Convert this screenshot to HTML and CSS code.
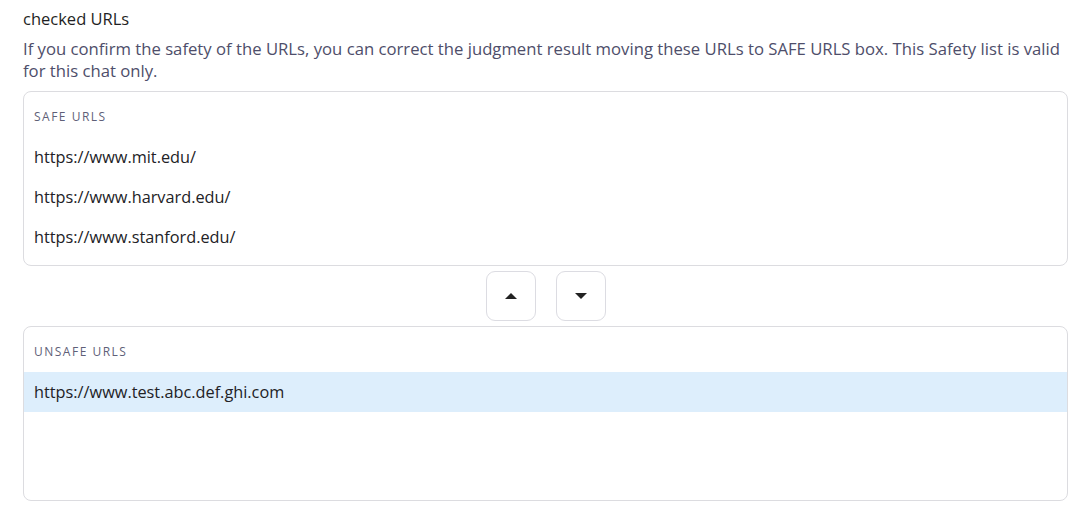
FILE: index.html
```html
<!DOCTYPE html>
<html lang="en">
<head>
<meta charset="utf-8">
<title>checked URLs</title>
<link rel="stylesheet" href="styles.css">
</head>
<body>
<div class="page">
  <div class="title">checked URLs</div>
  <p class="desc">If you confirm the safety of the URLs, you can correct the judgment result moving these URLs to SAFE URLS box. This Safety list is valid for this chat only.</p>
  <div class="box">
    <div class="label">SAFE URLS</div>
    <ul class="list">
      <li class="item">https://www.mit.edu/</li>
      <li class="item">https://www.harvard.edu/</li>
      <li class="item">https://www.stanford.edu/</li>
    </ul>
  </div>
  <div class="controls">
    <button class="btn" type="button" aria-label="Move up">
      <svg width="14" height="8" viewBox="0 0 14 8"><path d="M1 7 L7 1 L13 7 Z" fill="#222"/></svg>
    </button>
    <button class="btn" type="button" aria-label="Move down">
      <svg width="14" height="8" viewBox="0 0 14 8"><path d="M1 1 L13 1 L7 7 Z" fill="#222"/></svg>
    </button>
  </div>
  <div class="box">
    <div class="label">UNSAFE URLS</div>
    <ul class="list list-min">
      <li class="item selected">https://www.test.abc.def.ghi.com</li>
    </ul>
  </div>
</div>
</body>
</html>
```
FILE: styles.css
```css
html, body {
  margin: 0;
  padding: 0;
  background: #ffffff;
}
body {
  font-family: "Open Sans", "Noto Sans", sans-serif;
  color: #222226;
}
.page {
  width: 1045px;
  padding: 8px 19px 0 23px;
}
.title {
  font-size: 16.5px;
  line-height: 22px;
  color: #1f1f24;
}
.desc {
  margin: 8px 0 9px 0;
  font-size: 16.7px;
  line-height: 22px;
  color: #4e4e6a;
}
.box {
  border: 1px solid #dcdce0;
  border-radius: 8px;
  padding: 16px 0 8px 0;
  background: #fff;
}
.label {
  font-size: 12px;
  line-height: 18px;
  letter-spacing: 1.5px;
  color: #5f5f78;
  padding: 0 10px;
  margin-bottom: 11px;
}
.list {
  list-style: none;
  margin: 0;
  padding: 0;
}
.list-min {
  min-height: 120px;
}
.item {
  height: 40px;
  line-height: 40px;
  padding: 0 10px;
  font-size: 16.3px;
  color: #222226;
}
.selected {
  background: #ddeefc;
}
.controls {
  display: flex;
  justify-content: center;
  gap: 20px;
  margin: 5px 0;
}
.btn {
  width: 50px;
  height: 50px;
  border: 1px solid #dcdce2;
  border-radius: 9px;
  background: #fff;
  display: flex;
  align-items: center;
  justify-content: center;
  padding: 0;
}
.btn svg {
  display: block;
}
```
